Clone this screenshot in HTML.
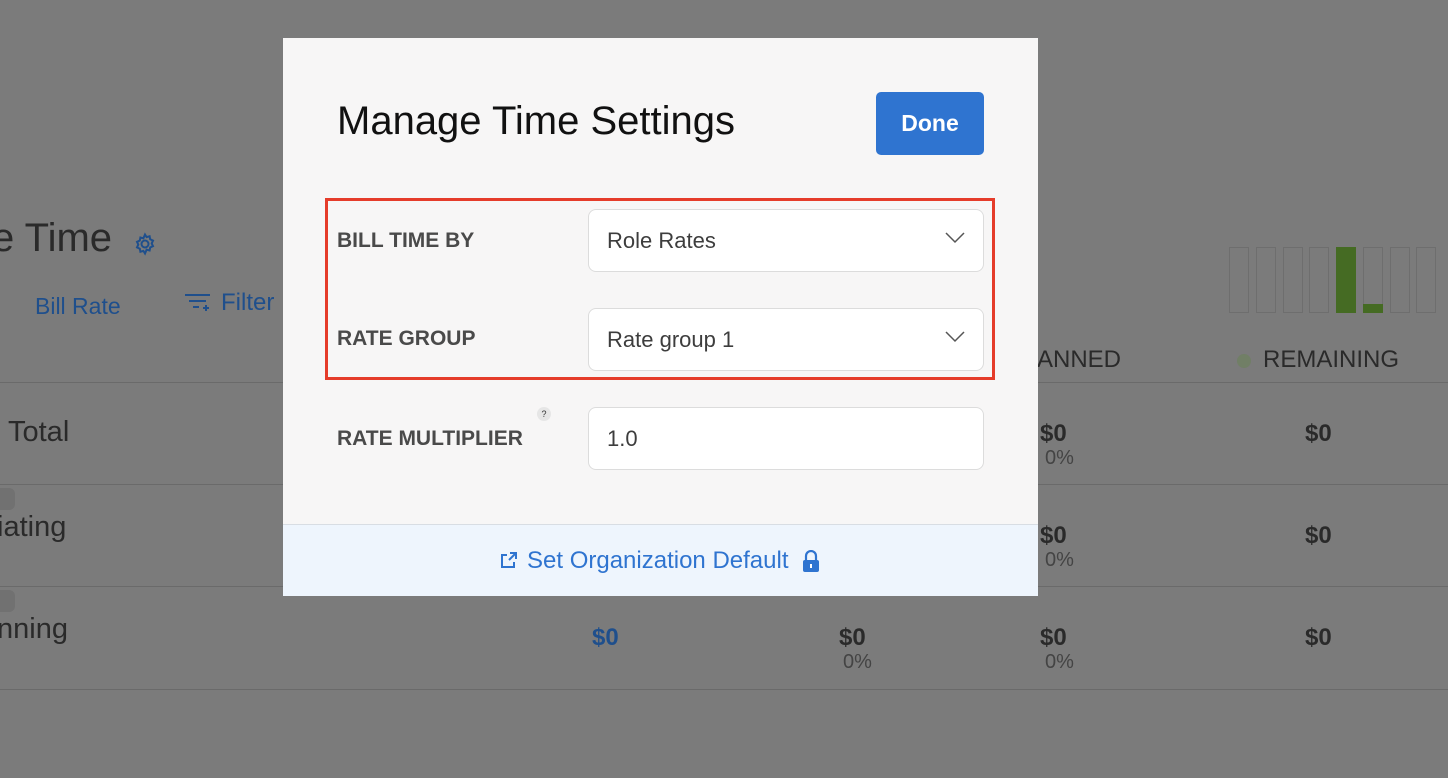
<!DOCTYPE html>
<html><head><style>
*{margin:0;padding:0;box-sizing:border-box}
body{width:1448px;height:778px;background:#7b7b7b;font-family:"Liberation Sans",sans-serif;position:relative;overflow:hidden}
.a{position:absolute;white-space:nowrap}
.d{color:#2a2a2a}
.line{position:absolute;left:0;width:1448px;height:1px;background:#6a6a6a}
.bar{position:absolute;top:247px;width:20px;height:66px;border:1px solid #6e6e6e}
.modal{position:absolute;left:283px;top:38px;width:755px;height:558px;background:#f7f6f6}
.foot{position:absolute;left:0;top:486px;width:755px;height:72px;background:#eef5fd;border-top:1px solid #d8dde3}
.lbl{position:absolute;left:54px;font-size:21px;font-weight:bold;color:#4a4a4a}
.inp{position:absolute;left:305px;width:396px;height:63px;background:#fff;border:1px solid #dcdcdc;border-radius:8px;font-size:22px;color:#3d3d3d;padding:18px 0 0 18px}
.chev{position:absolute;right:18px;top:22px}
</style></head><body>
<div class="a d" style="left:-8px;top:216px;font-size:40px">e Time</div>
<svg class="a" style="left:133px;top:232px" width="24" height="24" viewBox="0 0 24 24" fill="none" stroke="#1f4f8c" stroke-width="2"><circle cx="12" cy="12" r="3.5"/><path d="M12 2.5l1.6 2.6 3-.8.6 3 2.8 1.3-1.3 2.8 1.3 2.8-2.8 1.3-.6 3-3-.8L12 21.5l-1.6-2.6-3 .8-.6-3-2.8-1.3 1.3-2.8-1.3-2.8 2.8-1.3.6-3 3 .8z"/></svg>
<div class="a" style="left:35px;top:293px;font-size:23px;color:#1f4f8c">Bill Rate</div>
<svg class="a" style="left:185px;top:293px" width="28" height="20" fill="none" stroke="#1f4f8c" stroke-width="2"><path d="M0 2h25M4 8h17M8 14h6M18 15h6M21 12v6"/></svg>
<div class="a" style="left:221px;top:289px;font-size:24px;color:#1f4f8c">Filter</div>
<div class="bar" style="left:1229px"></div><div class="bar" style="left:1256px"></div><div class="bar" style="left:1283px"></div><div class="bar" style="left:1309px"></div>
<div class="bar" style="left:1336px;background:#456b23;border-color:#456b23"></div>
<div class="bar" style="left:1363px"><div style="position:absolute;left:-1px;bottom:-1px;width:20px;height:9px;background:#456b23"></div></div>
<div class="bar" style="left:1390px"></div><div class="bar" style="left:1416px"></div>
<div class="a d" style="left:1037px;top:346px;font-size:24px">ANNED</div>
<div class="a" style="left:1237px;top:354px;width:14px;height:14px;border-radius:50%;background:#717f66"></div>
<div class="a d" style="left:1263px;top:346px;font-size:24px">REMAINING</div>
<div class="line" style="top:382px"></div><div class="line" style="top:484px"></div><div class="line" style="top:586px"></div><div class="line" style="top:689px"></div>
<div class="a d" style="left:8px;top:416px;font-size:29px">Total</div>
<div class="a" style="left:-10px;top:488px;width:25px;height:22px;border-radius:6px;background:#717171"></div>
<div class="a d" style="left:-3px;top:511px;font-size:29px">iating</div>
<div class="a" style="left:-10px;top:590px;width:25px;height:22px;border-radius:6px;background:#717171"></div>
<div class="a d" style="left:-3px;top:613px;font-size:29px">nning</div>
<div class="a d" style="left:1040px;top:420px;font-size:24px;font-weight:bold">$0</div><div class="a" style="left:1045px;top:447px;font-size:20px;color:#444">0%</div>
<div class="a d" style="left:1305px;top:420px;font-size:24px;font-weight:bold">$0</div>
<div class="a d" style="left:1040px;top:522px;font-size:24px;font-weight:bold">$0</div><div class="a" style="left:1045px;top:549px;font-size:20px;color:#444">0%</div>
<div class="a d" style="left:1305px;top:522px;font-size:24px;font-weight:bold">$0</div>
<div class="a" style="left:592px;top:624px;font-size:24px;font-weight:bold;color:#1f4f8c">$0</div>
<div class="a d" style="left:839px;top:624px;font-size:24px;font-weight:bold">$0</div><div class="a" style="left:843px;top:651px;font-size:20px;color:#444">0%</div>
<div class="a d" style="left:1040px;top:624px;font-size:24px;font-weight:bold">$0</div><div class="a" style="left:1045px;top:651px;font-size:20px;color:#444">0%</div>
<div class="a d" style="left:1305px;top:624px;font-size:24px;font-weight:bold">$0</div>

<div class="modal">
<div class="a" style="left:54px;top:61px;font-size:40px;color:#111">Manage Time Settings</div>
<div class="a" style="left:593px;top:54px;width:108px;height:63px;background:#2f74d0;border-radius:5px;color:#fff;font-size:23px;font-weight:bold;text-align:center;line-height:63px">Done</div>
<div class="a" style="left:42px;top:160px;width:670px;height:182px;border:3px solid #e53c2a"></div>
<div class="lbl" style="top:191px">BILL TIME BY</div>
<div class="inp" style="top:171px">Role Rates<svg class="chev" width="20" height="12" fill="none" stroke="#555" stroke-width="1.5"><path d="M1 1l9 9 9-9"/></svg></div>
<div class="lbl" style="top:289px">RATE GROUP</div>
<div class="inp" style="top:270px">Rate group 1<svg class="chev" width="20" height="12" fill="none" stroke="#555" stroke-width="1.5"><path d="M1 1l9 9 9-9"/></svg></div>
<div class="lbl" style="top:389px">RATE MULTIPLIER</div>
<div class="a" style="left:254px;top:369px;width:14px;height:14px;border-radius:50%;background:#e6e6e6;font-size:9px;text-align:center;line-height:14px;color:#333">?</div>
<div class="inp" style="top:369px">1.0</div>
<div class="foot">
<svg class="a" style="left:217px;top:27px" width="17" height="17" fill="none" stroke="#2f74d0" stroke-width="2"><path d="M7 3H2v12h12v-5M9 8l7-7M10 1h6v6"/></svg>
<div class="a" style="left:244px;top:22px;font-size:24px;color:#2f74d0">Set Organization Default</div>
<svg class="a" style="left:518px;top:25px" width="20" height="22"><path d="M5 10V6a5 5 0 0 1 10 0v4" fill="none" stroke="#2f74d0" stroke-width="2.2"/><rect x="2" y="10" width="16" height="12" rx="2" fill="#2f74d0"/><rect x="9" y="14" width="2" height="4" fill="#fff"/></svg>
</div>
</div>
</body></html>
